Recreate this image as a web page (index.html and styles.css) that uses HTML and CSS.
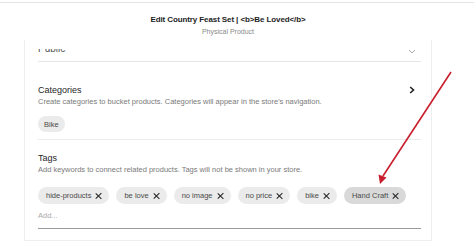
FILE: index.html
```html
<!DOCTYPE html>
<html>

<head>
    <link rel="stylesheet" href="styles.css">
</head>

<body>
    <div class="topline"></div>
    <div class="header">
        <div class="title">Edit Country Feast Set | &lt;b&gt;Be Loved&lt;/b&gt;</div>
        <div class="subtitle">Physical Product</div>
    </div>

    <div class="viewport">
        <div class="card">
            <div class="row public">
                <span class="public-label">Public</span>
                <svg class="chev-down" width="8" height="5" viewBox="0 0 8 5">
                    <path d="M1 1 L4 4 L7 1" fill="none" stroke="#aaa" stroke-width="1"/>
                </svg>
            </div>

            <div class="section categories">
                <div class="section-head">
                    <span class="section-title">Categories</span>
                    <svg class="chev-right" width="6" height="8" viewBox="0 0 6 8">
                        <path d="M1.2 1 L4.5 4 L1.2 7" fill="none" stroke="#222" stroke-width="1.6"/>
                    </svg>
                </div>
                <div class="section-desc">Create categories to bucket products. Categories will appear in the store's navigation.</div>
                <div class="pills">
                    <span class="pill plain">Bike</span>
                </div>
            </div>

            <div class="section tags">
                <div class="section-title">Tags</div>
                <div class="section-desc">Add keywords to connect related products. Tags will not be shown in your store.</div>
                <div class="pills">
                    <span class="pill">hide-products <i class="x"></i></span>
                    <span class="pill">be love <i class="x"></i></span>
                    <span class="pill">no image <i class="x"></i></span>
                    <span class="pill">no price <i class="x"></i></span>
                    <span class="pill">bike <i class="x"></i></span>
                    <span class="pill active">Hand Craft <i class="x"></i></span>
                </div>
                <div class="add-input">Add...</div>
            </div>
        </div>
    </div>

    <!-- annotation arrow drawn over the screenshot -->
    <svg class="annotation" width="474" height="250" viewBox="0 0 474 250">
        <line x1="451" y1="72" x2="383" y2="176" stroke="#c81e2c" stroke-width="1.6"/>
        <polygon points="380,184 378.5,174.5 386.5,177.5" fill="#c81e2c"/>
    </svg>
</body>

</html>
```

FILE: styles.css
```css
body {
    margin: 0;
    font-family: "Liberation Sans", Arial, sans-serif;
    background-color: #fff;
    overflow: hidden;
}

.topline {
    height: 2px;
    border-bottom: 1px solid #e4e4e4;
}

.header {
    width: 456px;
    height: 37px;
    text-align: center;
}

.title {
    padding-top: 12px;
    font-size: 8px;
    line-height: 10px;
    font-weight: bold;
    color: #1d1d1d;
    letter-spacing: -0.1px;
}

.subtitle {
    margin-top: 2px;
    font-size: 7px;
    line-height: 10px;
    color: #8a8a8a;
}

.viewport {
    height: 210px;
    overflow: hidden;
}

.card {
    margin-top: -1px;
    margin-left: 24px;
    width: 408px;
    box-sizing: border-box;
    border: 1px solid #eeeeee;
    padding: 8.5px 10px 11px 13px;
}

/* row that has scrolled mostly under the header */
.public {
    display: flex;
    justify-content: space-between;
    align-items: flex-start;
    height: 12.5px;
    overflow: hidden;
    border-bottom: 1px solid #e6e6e6;
}

.public-label {
    margin-top: -5.5px;
    font-size: 10px;
    line-height: 12px;
    color: #555;
}

.chev-down {
    margin-top: 0.5px;
    margin-right: 5px;
}

.section {
    border-bottom: 1px solid #ececec;
}

.categories {
    padding-top: 21px;
    padding-bottom: 7px;
}

.tags {
    padding-top: 11px;
    padding-bottom: 0;
    border-bottom: none;
}

.section-head {
    display: flex;
    justify-content: space-between;
    align-items: center;
}

.chev-right {
    margin-right: 6px;
}

.section-title {
    font-size: 9px;
    line-height: 14px;
    color: #262626;
}

.section-desc {
    font-size: 7.5px;
    line-height: 10px;
    color: #7a7a7a;
}

.pills {
    display: flex;
    flex-wrap: wrap;
    gap: 7px;
    margin-top: 9px;
}

.tags .pills {
    margin-top: 12px;
}

.pill {
    display: inline-flex;
    align-items: center;
    height: 17px;
    padding: 0 7px 0 8px;
    border-radius: 9px;
    background-color: #ebebeb;
    font-size: 7.5px;
    color: #4a4a4a;
}

.pill.plain {
    height: 16px;
    padding: 0 6px;
}

.pill.active {
    background-color: #d9d9d9;
}

/* small close cross */
.x {
    position: relative;
    width: 7px;
    height: 7px;
    margin-left: 4px;
}

.x::before,
.x::after {
    content: "";
    position: absolute;
    left: 3px;
    top: -0.5px;
    width: 1.3px;
    height: 8px;
    background-color: #222;
    transform: rotate(45deg);
}

.x::after {
    transform: rotate(-45deg);
}

.add-input {
    margin-top: 7px;
    width: 383px;
    font-size: 7.5px;
    line-height: 10px;
    padding-bottom: 7px;
    color: #aaa;
    border-bottom: 1.5px solid #9a9a9a;
}

.annotation {
    position: absolute;
    left: 0;
    top: 0;
    pointer-events: none;
}
```
